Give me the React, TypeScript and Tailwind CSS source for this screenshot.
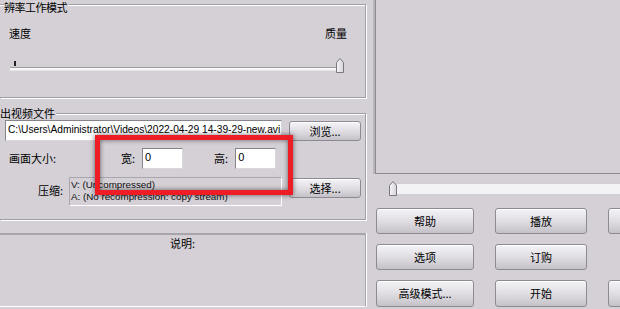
import React from "react";

const cjk = "font-['Noto_Sans_CJK_SC','Noto_Sans',sans-serif]";
const latin = "font-['Liberation_Sans','Noto_Sans_CJK_SC',sans-serif]";

// 按钮（渐变立体）
function Btn({ children, className = "" }: { children?: React.ReactNode; className?: string }) {
    return (
        <div
            className={`flex items-center justify-center rounded-[3px] border border-[#8e8a93] bg-gradient-to-b from-[#f4f3f6] via-[#e0dee3] to-[#c5c1c8] shadow-[inset_0_1px_0_#ffffff] text-[11px] leading-none text-black ${cjk} ${className}`}
        >
            {children}
        </div>
    );
}

// 滑块的拇指
function Thumb() {
    return (
        <svg width="10" height="17" viewBox="0 0 10 17" className="shrink-0 relative">
            <defs>
                <linearGradient id="tg" x1="0" y1="0" x2="1" y2="0">
                    <stop offset="0" stopColor="#f6f5f7" />
                    <stop offset="1" stopColor="#d6d3d9" />
                </linearGradient>
            </defs>
            <path d="M1.5 5.5 L5 1.5 L8.5 5.5 L8.5 15.5 L1.5 15.5 Z" fill="url(#tg)" stroke="#7b7781" strokeWidth="1" />
        </svg>
    );
}

function TextInput({ value, className = "" }: { value: string; className?: string }) {
    return (
        <div
            className={`h-[21px] bg-white border border-[#86838b] border-r-[#d9d6dc] border-b-[#d9d6dc] pl-[2px] pt-[2px] leading-[13px] text-black whitespace-nowrap overflow-hidden ${latin} ${className}`}
        >
            {value}
        </div>
    );
}

export default function App() {
    return (
        <div className={`relative w-[620px] h-[309px] overflow-hidden bg-[#d4d0d6] flex ${cjk}`}>
            {/* 左侧面板 */}
            <div className="w-[368px] shrink-0 flex flex-col">
                {/* 分辨率工作模式 */}
                <div className="relative mt-[4px] h-[94px] w-[366px] border-t border-r border-b border-[#a19da5] shadow-[inset_0_1px_0_#ffffff,1px_1px_0_#ffffff] pt-[20px] pl-[9px] pr-[18px]">
                    <span className="absolute -top-[4px] left-[4px] bg-[#d4d0d6] text-[11px] leading-[12px] text-black pr-[1px] tracking-[-0.5px]">
                        辨率工作模式
                    </span>
                    <div className="flex justify-between text-[11px] leading-[16px] text-black">
                        <span>速度</span>
                        <span>质量</span>
                    </div>
                    <div className="mt-[16px] flex items-center pl-[1px] pr-[2px]">
                        <div className="flex-1 flex flex-col">
                            <div className="ml-[4px] w-[2px] h-[5px] bg-[#222]" />
                            <div className="mt-[1px] h-[4px] border-t border-[#9e9aa2] bg-[#f8f8f9] border-b border-b-[#e6e4e8]" />
                        </div>
                        <div className="-ml-[3px]">
                            <Thumb />
                        </div>
                    </div>
                </div>

                {/* 输出视频文件 */}
                <div className="relative mt-[15px] h-[107px] w-[366px] border-t border-r border-b border-[#a19da5] shadow-[inset_0_1px_0_#ffffff,1px_1px_0_#ffffff] pt-[6px] pl-[5px] pr-[4px] flex flex-col">
                    <span className="absolute -top-[7px] left-[0px] bg-[#d4d0d6] text-[11px] leading-[13px] text-black pr-[1px]">
                        出视频文件
                    </span>
                    <div className="flex items-center">
                        <TextInput value="C:\Users\Administrator\Videos\2022-04-29 14-39-29-new.avi" className="w-[278px] text-[10.2px]" />
                        <Btn className="ml-[7px] w-[72px] h-[20px] mt-[1px]">浏览...</Btn>
                    </div>
                    <div className="mt-[7px] flex items-center text-[11px] text-black whitespace-nowrap">
                        <span className="ml-[4px] w-[60px]">画面大小:</span>
                        <span className="ml-[52px]">宽:</span>
                        <TextInput value="0" className="ml-[7px] w-[41px] text-[11px]" />
                        <span className="ml-[31px]">高:</span>
                        <TextInput value="0" className="ml-[7px] w-[41px] text-[11px]" />
                    </div>
                    <div className="mt-[8px] flex items-start">
                        <span className="ml-[33px] mt-[5px] w-[26px] text-[11px] leading-[16px] text-black whitespace-nowrap">压缩:</span>
                        <div className={`ml-[5px] w-[214px] h-[29px] border border-[#aaa6ae] border-r-white border-b-white pl-[1px] pt-[1px] text-[9.8px] leading-[12px] text-[#111] whitespace-nowrap ${latin}`}>
                            <div>V: (Uncompressed)</div>
                            <div>A: (No recompression: copy stream)</div>
                        </div>
                        <Btn className="ml-[7px] w-[72px] h-[20px] mt-[1px]">选择...</Btn>
                    </div>
                </div>

                {/* 说明 */}
                <div className="mt-[13px] h-[74px] w-[366px] border-t-2 border-r border-b border-[#a8a4ac] border-b-white shadow-[1px_0_0_#ffffff] flex justify-center">
                    <span className="text-[11px] leading-[14px] mt-[1px] text-black">说明:</span>
                </div>
            </div>

            {/* 右侧面板 */}
            <div className="flex-1 flex flex-col">
                <div className="ml-[5px] h-[174px] border-l-2 border-[#bab6be]">
                    <div className="h-full border-l border-b border-[#8c8991]" />
                </div>

                <div className="mt-[6px] flex items-center pl-[20px]">
                    <Thumb />
                    <div className="flex-1 -ml-[1px] h-[11px] bg-[#f3f2f4] border-t border-[#d0cdd3]" />
                </div>

                <div className="mt-[11px] ml-[8px] grid grid-cols-[98px_92px_60px] gap-x-[21px] gap-y-[10px]">
                    <Btn className="h-[26px]">帮助</Btn>
                    <Btn className="h-[26px]">播放</Btn>
                    <Btn className="h-[26px]" />
                    <Btn className="h-[26px]">选项</Btn>
                    <Btn className="h-[26px]">订购</Btn>
                    <div />
                    <Btn className="h-[27px]">高级模式...</Btn>
                    <Btn className="h-[27px]">开始</Btn>
                    <Btn className="h-[27px]" />
                </div>
            </div>

            {/* 红色标注框 */}
            <div className="absolute left-[95px] top-[135px] w-[198px] h-[60px] border-[5px] border-[#ee1c24] shadow-[0_0_5px_rgba(0,0,0,0.55),inset_0_0_5px_rgba(0,0,0,0.55)]" />
        </div>
    );
}
